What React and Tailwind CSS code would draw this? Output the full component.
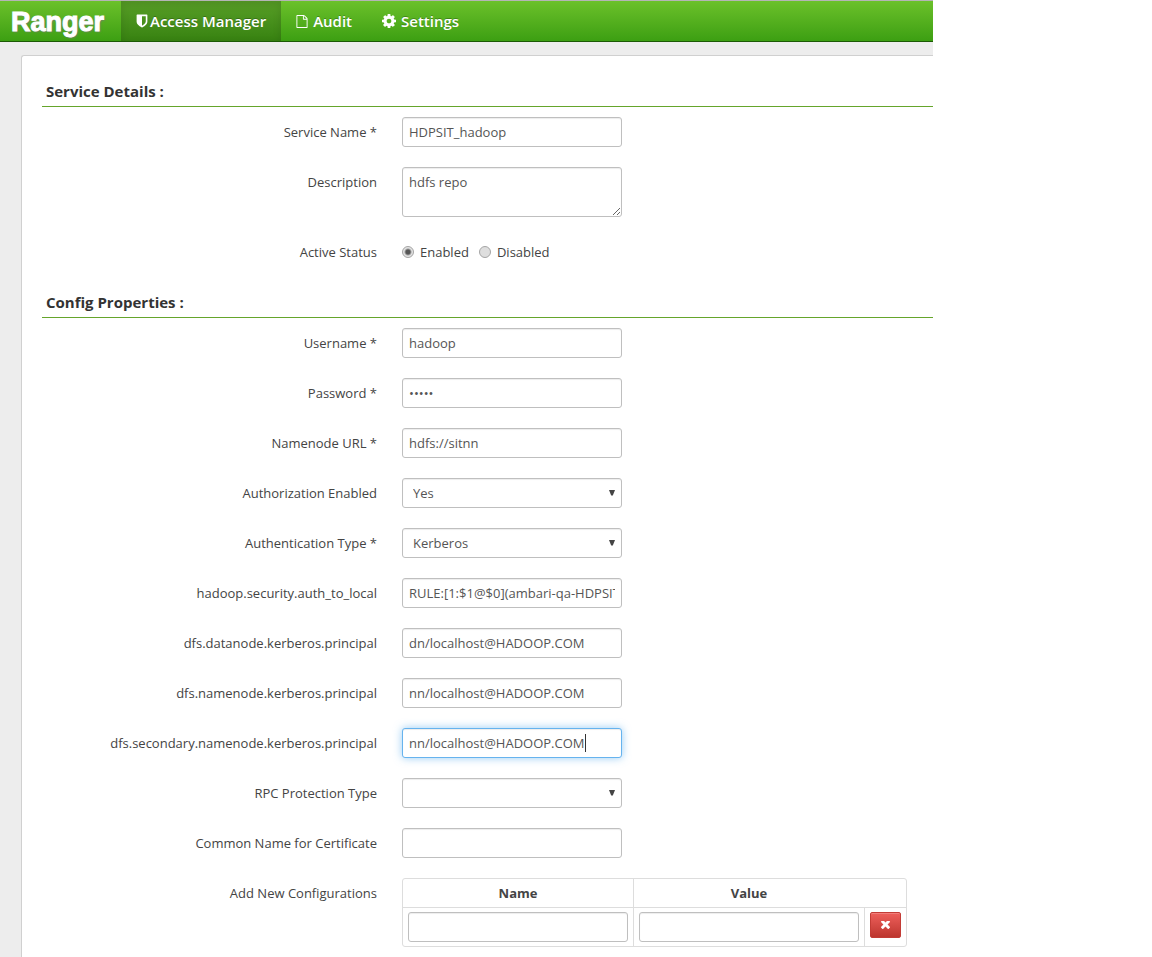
import React from "react";

const ICONS = {
  shield:
    "M1344 1024v-640h-448v1137q119-63 213-137 235-184 235-360zm192-768v768q0 86-33.5 170.5t-83 150-118 127.5-126.5 103-121 77.5-89.5 49.5-42.5 20q-12 6-26 6t-26-6q-16-7-42.5-20t-89.5-49.5-121-77.5-126.5-103-118-127.5-83-150-33.5-170.5v-768q0-26 19-45t45-19h1152q26 0 45 19t19 45z",
  file: "M1596 380q28 28 48 76t20 88v1152q0 40-28 68t-68 28h-1344q-40 0-68-28t-28-68v-1600q0-40 28-68t68-28h896q40 0 88 20t76 48zm-444-244v376h376q-10-29-22-41l-313-313q-12-12-41-22zm384 1528v-1024h-416q-40 0-68-28t-28-68v-416h-768v1536h1280z",
  cog: "M1152 896q0-106-75-181t-181-75-181 75-75 181 75 181 181 75 181-75 75-181zm512-109v222q0 12-8 23t-20 13l-185 28q-19 54-39 91 35 50 107 138 10 12 10 25t-9 23q-27 37-99 108t-94 71q-12 0-26-9l-138-108q-44 23-91 38-16 136-29 186-7 28-36 28h-222q-14 0-24.5-8.5t-11.5-21.5l-28-184q-49-16-90-37l-141 107q-10 9-25 9-14 0-25-11-126-114-165-168-7-10-7-23 0-12 8-23 15-21 51-66.5t54-70.5q-27-50-41-99l-183-27q-13-2-21-12.5t-8-23.5v-222q0-12 8-23t19-13l186-28q14-46 39-92-40-57-107-138-10-12-10-24 0-10 9-23 26-36 98.5-107.5t94.5-71.5q13 0 26 10l138 107q44-23 91-38 16-136 29-186 7-28 36-28h222q14 0 24.5 8.5t11.5 21.5l28 184q49 16 90 37l142-107q9-9 24-9 13 0 25 10 129 119 165 170 7 8 7 22 0 12-8 23-15 21-51 66.5t-54 70.5q26 50 41 98l183 28q13 2 21 12.5t8 23.5z",
  remove:
    "M1490 1322q0 40-28 68l-136 136q-28 28-68 28t-68-28l-294-294-294 294q-28 28-68 28t-68-28l-136-136q-28-28-28-68t28-68l294-294-294-294q-28-28-28-68t28-68l136-136q28-28 68-28t68 28l294 294 294-294q28-28 68-28t68 28l136 136q28 28 28 68t-28 68l-294 294 294 294q28 28 28 68z",
};

function Icon({ name, viewBox = "0 0 1792 1792", className }) {
  return (
    <svg viewBox={viewBox} className={className} fill="currentColor" aria-hidden="true">
      <path d={ICONS[name]} />
    </svg>
  );
}

const control =
  "block w-[220px] rounded-[3px] border border-[#bfbfbf] bg-white text-[13px] leading-5 text-[#555] shadow-[inset_0_1px_1px_rgba(0,0,0,0.075)] outline-none";
const inputBox = control + " h-[30px] px-[6px]";

function NavLink({ active, children }) {
  return (
    <a
      href="#"
      className={
        "flex items-center px-[15px] text-[15px] font-semibold text-white [text-shadow:0_-1px_0_rgba(0,0,0,0.25)] " +
        (active
          ? "bg-linear-to-b from-[#589f26] to-[#378211] shadow-[inset_0_3px_8px_rgba(0,0,0,0.125)]"
          : "")
      }
    >
      {children}
    </a>
  );
}

function Row({ id, label, children }) {
  return (
    <div className="mb-5 flex gap-[25px]">
      <label htmlFor={id} className="w-[335px] shrink-0 pt-[5px] text-right leading-5">
        {label}
      </label>
      <div className="relative">{children}</div>
    </div>
  );
}

function TextRow({ id, label, value, type = "text" }) {
  return (
    <Row id={id} label={label}>
      <input id={id} type={type} defaultValue={value} className={inputBox} />
    </Row>
  );
}

function SelectRow({ id, label, value }) {
  return (
    <Row id={id} label={label}>
      <select id={id} defaultValue={value} className={control + " h-[30px] appearance-none px-[10px]"}>
        <option>{value}</option>
      </select>
      <svg
        viewBox="0 0 6 6"
        className="pointer-events-none absolute top-3 right-[7px] h-[6px] w-[6px]"
        fill="#444"
        aria-hidden="true"
      >
        <path d="M0 0h6L3.8 5.5H2.2z" />
      </svg>
    </Row>
  );
}

function Section({ title, children }) {
  return (
    <section>
      <h2 className="mb-[10px] border-b border-[#65a52b] px-1 pb-1 text-[15px] leading-[22px] font-bold text-[#333]">
        {title}
      </h2>
      {children}
    </section>
  );
}

const radio =
  "h-3 w-3 appearance-none rounded-full border border-[#a5a5a5] bg-[#dedede] checked:bg-[radial-gradient(circle,#555_0_2px,#e3e3e3_4px)]";

export default function App() {
  return (
    <div className="min-h-screen bg-white font-['Open_Sans',sans-serif] text-[13px] text-[#444]">
      <div className="flex min-h-screen w-[81%] flex-col bg-[#ededed]">
        <header className="flex h-[42px] shrink-0 border-t border-b border-t-[#b5b5b5] border-b-[#1c5a05] bg-linear-to-b from-[#6bc12a] to-[#3c9f12]">
          <a
            href="#"
            className="flex w-[121px] shrink-0 items-center pt-px pl-[11px] font-['Liberation_Sans',sans-serif] text-[27px] leading-8 font-bold text-white [-webkit-text-stroke:1px_white] [text-shadow:1px_1px_2px_#777]"
          >
            Ranger
          </a>
          <nav className="flex">
            <NavLink active>
              <Icon name="shield" viewBox="256 128 1280 1664" className="mr-[2px] h-[14px] w-[12px]" />
              Access Manager
            </NavLink>
            <NavLink>
              <Icon name="file" viewBox="128 0 1536 1792" className="mr-[5px] h-[13px] w-[12px]" />
              Audit
            </NavLink>
            <NavLink>
              <Icon name="cog" viewBox="128 128 1536 1536" className="mr-[5px] h-[14px] w-[14px]" />
              Settings
            </NavLink>
          </nav>
        </header>

        <main className="mt-[13px] ml-[21px] flex-1 rounded-tl-[3px] border-t border-l border-[#d0d0d0] bg-white pt-[24px] pl-5">
          <form>
            <Section title="Service Details :">
              <TextRow id="service-name" label="Service Name *" value="HDPSIT_hadoop" />
              <Row id="description" label="Description">
                <textarea
                  id="description"
                  defaultValue="hdfs repo"
                  className={control + " h-[50px] px-[6px] py-1"}
                />
              </Row>
              <div role="radiogroup" aria-labelledby="status-label" className="mb-[29px] flex gap-[25px]">
                <span id="status-label" className="w-[335px] shrink-0 pt-[5px] text-right leading-5">
                  Active Status
                </span>
                <div className="flex gap-[10px] pt-1 leading-5">
                  <label className="flex items-center gap-[6px]">
                    <input type="radio" name="status" defaultChecked className={radio} />
                    Enabled
                  </label>
                  <label className="flex items-center gap-[6px]">
                    <input type="radio" name="status" className={radio} />
                    Disabled
                  </label>
                </div>
              </div>
            </Section>

            <Section title="Config Properties :">
              <TextRow id="username" label="Username *" value="hadoop" />
              <TextRow id="password" label="Password *" value="admin" type="password" />
              <TextRow id="namenode-url" label="Namenode URL *" value="hdfs://sitnn" />
              <SelectRow id="authorization" label="Authorization Enabled" value="Yes" />
              <SelectRow id="authentication" label="Authentication Type *" value="Kerberos" />
              <TextRow
                id="auth-to-local"
                label="hadoop.security.auth_to_local"
                value="RULE:[1:$1@$0](ambari-qa-HDPSIT@HADOOP.COM)"
              />
              <TextRow id="datanode" label="dfs.datanode.kerberos.principal" value="dn/localhost@HADOOP.COM" />
              <TextRow id="namenode" label="dfs.namenode.kerberos.principal" value="nn/localhost@HADOOP.COM" />
              <Row id="secondary" label="dfs.secondary.namenode.kerberos.principal">
                <input
                  id="secondary"
                  type="text"
                  defaultValue="nn/localhost@HADOOP.COM"
                  className="block h-[30px] w-[220px] rounded-[3px] border border-[#66b3ee] bg-white px-[6px] text-[13px] leading-5 text-[#555] shadow-[inset_0_1px_1px_rgba(0,0,0,0.075),0_0_8px_rgba(82,168,236,0.6)] outline-none"
                />
                <span className="absolute top-[6px] left-[183px] h-[18px] w-px bg-[#333]" />
              </Row>
              <SelectRow id="rpc" label="RPC Protection Type" value="" />
              <TextRow id="common-name" label="Common Name for Certificate" value="" />
              <div className="flex gap-[25px]">
                <span id="configs-label" className="w-[335px] shrink-0 pt-[5px] text-right leading-5">
                  Add New Configurations
                </span>
                <table
                  aria-labelledby="configs-label"
                  className="border-separate border-spacing-0 rounded-[3px] border border-[#ddd]"
                >
                  <thead>
                    <tr className="leading-5 text-[#444]">
                      <th className="px-[5px] py-1 font-bold">Name</th>
                      <th className="border-l border-[#ddd] px-[5px] py-1 font-bold">Value</th>
                      <th />
                    </tr>
                  </thead>
                  <tbody>
                    <tr className="align-top">
                      <td className="border-t border-[#ddd] px-[5px] py-1">
                        <input type="text" aria-label="Name" className={inputBox} />
                      </td>
                      <td className="border-t border-l border-[#ddd] px-[5px] py-1">
                        <input type="text" aria-label="Value" className={inputBox} />
                      </td>
                      <td className="border-t border-l border-[#ddd] px-[5px] py-1">
                        <button
                          type="button"
                          aria-label="Remove"
                          className="flex h-[26px] w-[31px] items-center justify-center rounded-[2px] border border-[#c33c36] bg-linear-to-b from-[#ee5f5b] to-[#bd362f] text-white shadow-[inset_0_1px_0_rgba(255,255,255,0.2)]"
                        >
                          <Icon name="remove" viewBox="302 502 1188 1052" className="h-2 w-[9px]" />
                        </button>
                      </td>
                    </tr>
                  </tbody>
                </table>
              </div>
            </Section>
          </form>
        </main>
      </div>
    </div>
  );
}
